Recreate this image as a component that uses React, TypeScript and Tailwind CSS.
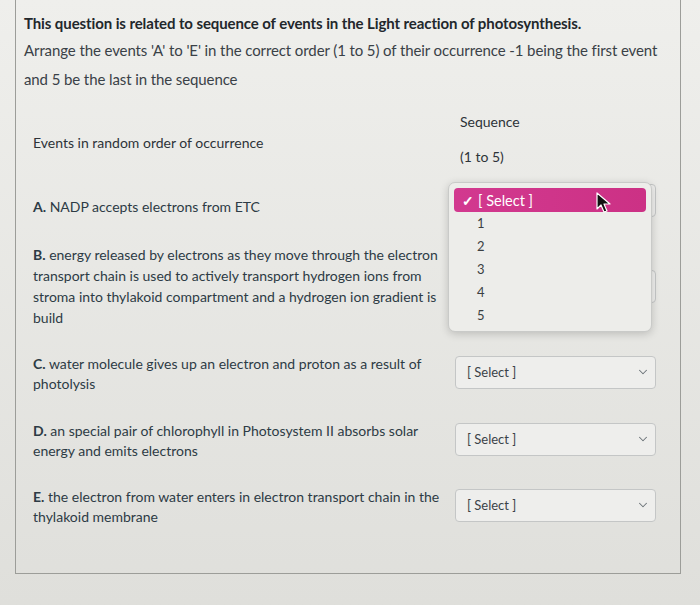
import { ChevronDown } from 'lucide-react';

// Events to be ordered, with the bold letter split off
const events = [
  { id: 'C', text: 'water molecule gives up an electron and proton as a result of photolysis', mt: 'mt-[22px]' },
  { id: 'D', text: 'an special pair of chlorophyll in Photosystem II absorbs solar energy and emits electrons', mt: 'mt-[23px]' },
  { id: 'E', text: 'the electron from water enters in electron transport chain in the thylakoid membrane', mt: 'mt-[22px]' },
];

const options = ['1', '2', '3', '4', '5'];

function SelectBox({ children }: { children?: React.ReactNode }) {
  return (
    <div className="relative w-[201px] h-[33px] shrink-0">
      <div className="flex items-center justify-between h-full pl-[11px] pr-[5px] border border-[#c4c6c6] rounded-[4px] bg-[#eeeeec] text-[13px] text-[#3a4248]">
        <span>[ Select ]</span>
        <ChevronDown size={14} strokeWidth={1.8} className="text-[#6b7378]" />
      </div>
      {children}
    </div>
  );
}

function Cursor() {
  return (
    <svg width="16" height="22" viewBox="0 0 16 22" className="absolute left-[142px] top-[4px]">
      <path d="M1 1 L1 17 L5 13 L8 20 L11 19 L8 12 L14 12 Z" fill="#111" stroke="#fff" strokeWidth="1.2" strokeLinejoin="round" />
    </svg>
  );
}

function OpenMenu() {
  return (
    <div className="absolute left-[-7px] top-[-2px] w-[204px] pt-[5px] pb-[4px] rounded-[7px] border border-[#c9cac8] bg-[#ededea] shadow-[0_2px_8px_rgba(0,0,0,0.18)] z-10">
      <div className="relative flex items-center h-[24px] mx-[5px] pl-[8px] rounded-[4px] bg-gradient-to-r from-[#d2398f] to-[#cc3185] text-white text-[14.5px]">
        <span className="w-[16px] text-[14px] font-bold">✓</span>
        <span>[ Select ]</span>
        <Cursor />
      </div>
      {options.map((o) => (
        <div key={o} className="h-[23px] flex items-center pl-[28px] text-[13px] text-[#3b3f42]">
          {o}
        </div>
      ))}
    </div>
  );
}

export default function App() {
  return (
    <div
      className="w-[700px] h-[605px] overflow-hidden bg-gradient-to-b from-[#efefec] to-[#dfdfdb] text-[#2d3b45]"
      style={{ fontFamily: 'Lato, "Open Sans", sans-serif' }}
    >
      <div className="ml-[15px] w-[666px] h-[574px] border-l border-r border-b border-[#9c9d99] pl-[8px]">
        <h1 className="pt-[13px] text-[15px] leading-[20px] font-bold tracking-[-0.1px] text-[#22272b]">
          This question is related to sequence of events in the Light reaction of photosynthesis.
        </h1>
        <p className="mt-[3px] w-[636px] text-[15px] leading-[29px] tracking-[-0.1px] text-[#3a4147]">
          Arrange the events 'A' to 'E' in the correct order (1 to 5) of their occurrence -1 being the first event and 5 be the last in the sequence
        </p>

        <div className="ml-[9px] mt-[18px] flex items-center text-[14px] text-[#2d3338]">
          <div className="w-[422px] pt-[5px]">Events in random order of occurrence</div>
          <div className="flex flex-col gap-[15px] pl-[5px] leading-[20px]">
            <span>Sequence</span>
            <span>(1 to 5)</span>
          </div>
        </div>

        {/* A: this select is open */}
        <div className="ml-[9px] mt-[17px] flex items-center text-[14px] leading-[21px]">
          <div className="w-[422px] pt-[12px]">
            <b>A.</b> NADP accepts electrons from ETC
          </div>
          <SelectBox>
            <OpenMenu />
          </SelectBox>
        </div>

        <div className="ml-[9px] mt-[27px] flex items-center text-[14px] leading-[21px]">
          <div className="w-[412px] mr-[10px]">
            <b>B.</b> energy released by electrons as they move through the electron transport chain is used to actively transport hydrogen ions from stroma into thylakoid compartment and a hydrogen ion gradient is build
          </div>
          <SelectBox />
        </div>

        {events.map((e) => (
          <div key={e.id} className={`ml-[9px] ${e.mt} flex items-center text-[14px] leading-[20px]`}>
            <div className="w-[412px] mr-[10px] pt-[4px]">
              <b>{e.id}.</b> {e.text}
            </div>
            <SelectBox />
          </div>
        ))}
      </div>
    </div>
  );
}
